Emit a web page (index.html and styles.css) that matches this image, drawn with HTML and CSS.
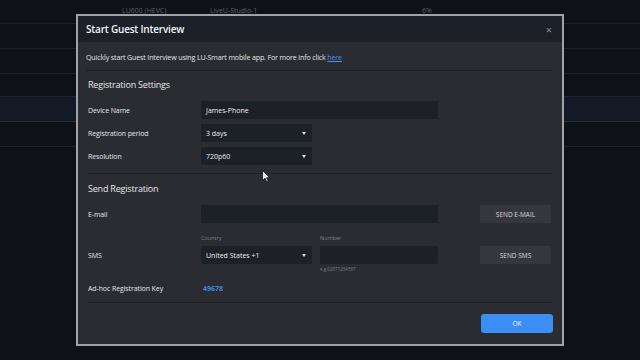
FILE: index.html
```html
<!DOCTYPE html>
<html>
<head>
<meta charset="utf-8">
<link rel="stylesheet" href="styles.css">
</head>
<body>
<div class="bg">
  <div class="bg-row first"><span class="c1">LU600 (HEVC)</span><span class="c2">LiveU-Studio-1</span><span class="c3">6%</span></div>
  <div class="bg-row"></div>
  <div class="bg-row"></div>
  <div class="bg-row short"></div>
  <div class="bg-row hl"></div>
  <div class="bg-row"></div>
</div>

<div class="dialog">
  <div class="dlg-head">
    <span class="dlg-title">Start Guest Interview</span>
    <span class="dlg-close">×</span>
  </div>
  <div class="dlg-body">
    <p class="intro">Quickly start Guest Interview using LU-Smart mobile app. For more info click <a class="link" href="#">here</a></p>
    <div class="sep sep-a"></div>
    <h3 class="section s1">Registration Settings</h3>

    <div class="row r-device">
      <span class="label">Device Name</span>
      <div class="field wide">James-Phone</div>
    </div>
    <div class="row r-next">
      <span class="label">Registration period</span>
      <div class="field select">3 days<span class="caret"></span></div>
    </div>
    <div class="row r-next">
      <span class="label">Resolution</span>
      <div class="field select">720p60<span class="caret"></span></div>
    </div>

    <div class="sep sep-b"></div>
    <h3 class="section s2">Send Registration</h3>

    <div class="row r-email">
      <span class="label">E-mail</span>
      <div class="field wide"></div>
      <span class="gap"></span>
      <button class="btn">SEND E-MAIL</button>
    </div>
    <div class="row r-sublabels">
      <span class="label"></span>
      <span class="sub">Country</span>
      <span class="sub num">Number</span>
    </div>
    <div class="row r-sms">
      <span class="label">SMS</span>
      <div class="field select">United States +1<span class="caret"></span></div>
      <div class="field number"></div>
      <button class="btn">SEND SMS</button>
    </div>
    <div class="row r-hint">
      <span class="label"></span>
      <span class="hint">e.g.02071234567</span>
    </div>
    <div class="row r-key">
      <span class="label">Ad-hoc Registration Key</span>
      <span class="key">49678</span>
    </div>

    <div class="sep sep-c"></div>
    <div class="footer">
      <button class="ok">OK</button>
    </div>
  </div>
</div>

<svg class="cursor" width="9" height="13" viewBox="0 0 9 13"><path d="M0.5 0.5 L0.5 10.5 L3 8.2 L4.8 12 L6.3 11.3 L4.6 7.7 L7.8 7.7 Z" fill="#e8e8e8" stroke="#111" stroke-width="0.8"/></svg>
</body>
</html>
```

FILE: styles.css
```css
* { box-sizing: border-box; }
html, body { margin: 0; padding: 0; }
body {
  width: 640px;
  height: 360px;
  overflow: hidden;
  background: #0e1116;
  font-family: "Open Sans", "Noto Sans", sans-serif;
  position: relative;
}

.bg { display: flex; flex-direction: column; }
.bg-row {
  height: 25px;
  border-bottom: 1px solid #1d2229;
  display: flex;
  align-items: flex-start;
  font-size: 7px;
  color: #5d626a;
}
.bg-row.first { height: 24px; padding-top: 6px; }
.bg-row.short { height: 23px; }
.bg-row.hl { background: #131a25; border-bottom-color: #252c36; }
.c1 { margin-left: 122px; width: 88px; }
.c2 { width: 212px; }

.dialog {
  position: absolute;
  left: 76px;
  top: 14px;
  width: 488px;
  height: 332px;
  border: 2px solid #9fa2a7;
  background: #2a2c31;
  display: flex;
  flex-direction: column;
}
.dlg-head {
  height: 26px;
  background: #1b2029;
  display: flex;
  align-items: center;
  justify-content: space-between;
  padding: 0 10px 0 8px;
}
.dlg-title {
  color: #f2f3f5;
  font-size: 10px;
  font-weight: 600;
  letter-spacing: -0.2px;
}
.dlg-close {
  color: #8b8f96;
  font-size: 11px;
  line-height: 1;
}
.dlg-body {
  flex: 1;
  padding: 0 10px 0 10px;
  display: flex;
  flex-direction: column;
}
.intro {
  margin: 8px 0 0 -2px;
  height: 14px;
  line-height: 14px;
  font-size: 7.1px;
  color: #e3e4e6;
  letter-spacing: -0.15px;
}
.link { color: #4d90f0; text-decoration: underline; }
.sep { height: 1px; background: #1f2126; }
.sep-a { margin-top: 6px; margin-left: -2px; }
.sep-b { margin-top: 8px; }
.sep-c { margin-top: 7px; }
.section {
  margin: 0;
  height: 14px;
  line-height: 14px;
  font-size: 9px;
  font-weight: 400;
  color: #e6e7e9;
  letter-spacing: -0.2px;
}
.s1 { margin-top: 7px; }
.s2 { margin-top: 8px; }

.row {
  display: grid;
  grid-template-columns: 113px 111px 8px 118px 42px 71px;
  align-items: center;
}
.label { font-size: 7px; color: #e4e5e7; letter-spacing: -0.1px; }
.row .label { grid-column: 1; }
.r-device { margin-top: 9px; height: 18px; }
.r-next { margin-top: 5px; height: 18px; }
.r-email { margin-top: 9px; height: 18px; }
.r-sublabels { margin-top: 10px; height: 10px; }
.r-sms { margin-top: 3px; height: 18px; }
.r-hint { margin-top: 1px; height: 8px; }
.r-key { margin-top: 8px; height: 14px; }

.field {
  height: 18px;
  background: #1c2027;
  color: #eceef0;
  font-size: 7px;
  display: flex;
  align-items: center;
  padding: 0 5px;
  position: relative;
  border-radius: 1px;
}
.field.wide { grid-column: 2 / 5; }
.field.select { grid-column: 2; justify-content: space-between; }
.field.number { grid-column: 4; }
.gap { grid-column: 5; }
.caret {
  width: 0; height: 0;
  border-left: 2.5px solid transparent;
  border-right: 2.5px solid transparent;
  border-top: 3px solid #e6e6e6;
  margin-right: 1px;
}
.btn {
  grid-column: 6;
  height: 18px;
  border: none;
  background: #35373c;
  color: #d7d9dc;
  font-family: "Open Sans", sans-serif;
  font-size: 6.5px;
  padding: 0;
}
.sub { grid-column: 2; font-size: 5.5px; color: #7c8087; }
.sub.num { grid-column: 4; }
.hint { grid-column: 4; font-size: 4.5px; color: #7c8087; }
.key { grid-column: 2; font-size: 7px; font-weight: 700; color: #3f86e6; padding-left: 2px; }

.footer {
  display: flex;
  justify-content: flex-end;
  margin-top: 11px;
}
.ok {
  width: 72px;
  height: 19px;
  border: none;
  border-radius: 3px;
  background: #3b8ef3;
  color: #eef4ff;
  font-family: "Open Sans", sans-serif;
  font-size: 6.5px;
  margin-right: -1px;
}
.cursor { position: absolute; left: 262px; top: 170px; }
```
